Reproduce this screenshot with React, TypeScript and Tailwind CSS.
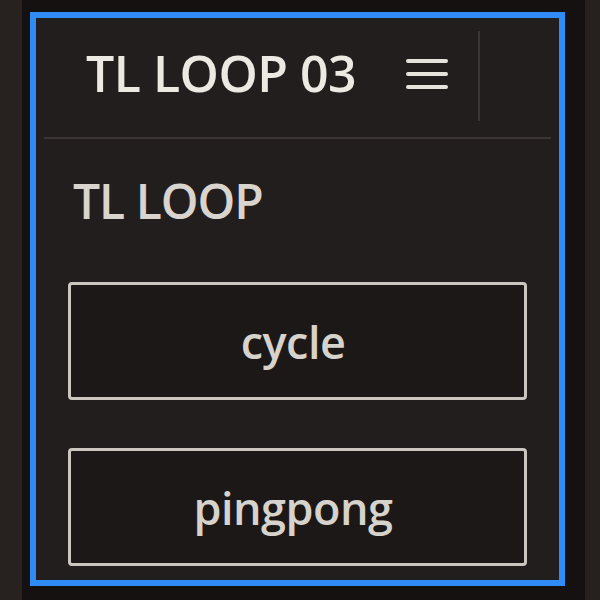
const font = { fontFamily: '"Open Sans", "Noto Sans", sans-serif' };

function MenuIcon() {
  return (
    <svg width="42" height="32" viewBox="0 0 42 32" className="ml-[50px] text-[#e6e2dc]">
      <g stroke="currentColor" strokeWidth="4" strokeLinecap="round">
        <line x1="2" y1="3" x2="40" y2="3" />
        <line x1="2" y1="16" x2="40" y2="16" />
        <line x1="2" y1="29" x2="40" y2="29" />
      </g>
    </svg>
  );
}

function LoopButton({ label }: { label: string }) {
  return (
    <button className="h-[118px] w-full shrink-0 rounded-[4px] border-[3px] border-[#cbc6bf] bg-[#1b1817] pr-[9px] pt-[2px] text-[45px] font-semibold text-[#d6d2cc] tracking-[-0.5px]">
      {label}
    </button>
  );
}

export default function App() {
  return (
    <div className="flex h-[600px] w-[600px] bg-[#141110]" style={font}>
      <div className="w-[22px] bg-[#27211f]" />
      <div className="ml-[8px] mt-[12px] flex h-[574px] w-[535px] flex-col overflow-hidden border-[6px] border-[#2e8cf4] bg-[#221e1d]">
        {/* panel header */}
        <div className="flex h-[119px] shrink-0 items-center pb-[8px] pl-[50px] pr-[8px]">
          <span className="text-[50px] font-semibold tracking-[-0.5px] text-[#ece8e2]">TL LOOP 03</span>
          <MenuIcon />
          <div className="ml-[30px] mt-[4px] h-[90px] w-[2px] bg-[#3a3533]" />
        </div>
        <div className="mx-[8px] h-[2px] shrink-0 bg-[#3b3634]" />
        <div className="flex flex-1 flex-col px-[32px]">
          <div className="mt-[26px] pl-[5px] text-[48px] font-semibold tracking-[-1px] text-[#d9d4ce]">TL LOOP</div>
          <div className="mt-[45px] flex flex-col gap-[48px]">
            <LoopButton label="cycle" />
            <LoopButton label="pingpong" />
          </div>
        </div>
      </div>
      <div className="ml-[20px] w-[15px] bg-[#26201e]" />
    </div>
  );
}
